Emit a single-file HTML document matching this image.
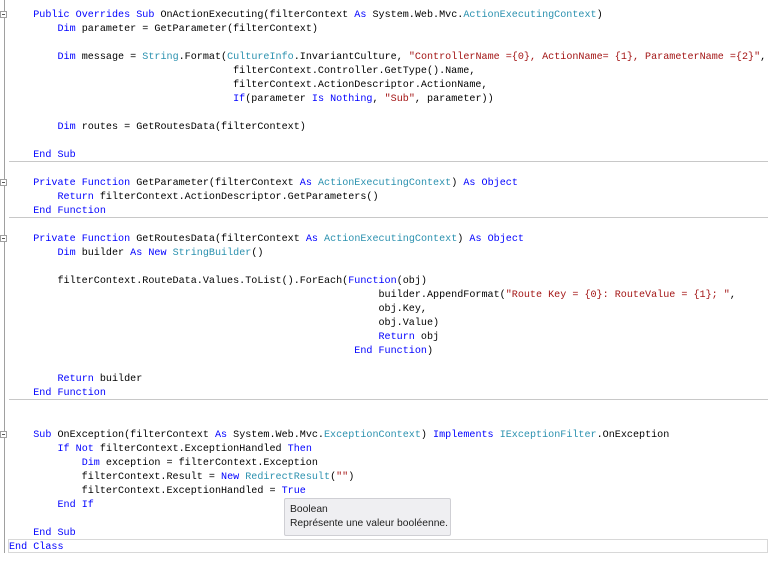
<!DOCTYPE html>
<html><head><meta charset="utf-8"><style>
body{margin:0;width:768px;height:569px;background:#fff;overflow:hidden;position:relative;font-family:"Liberation Mono",monospace;}
#code{position:absolute;left:9px;top:9px;font-size:10.1px;line-height:14px;white-space:pre;color:#000;}
.k{color:#0000ff}.t{color:#2b91af}.s{color:#a31515}
.sep{position:absolute;left:9px;right:0;height:1px;background:#c8c8c8}
.gut{position:absolute;left:4px;top:0;width:1px;height:553px;background:#a0a0a0}
.box{position:absolute;left:0;width:7px;height:7px;border:1px solid #a0a0a0;background:#fff;box-sizing:border-box}
.box:after{content:"";position:absolute;left:1px;top:2px;width:3px;height:1px;background:#555}
.cur{position:absolute;left:8px;right:0;top:539px;height:14px;border:1px solid #d8d8d8;box-sizing:border-box}
.tip{position:absolute;left:284px;top:498px;width:167px;height:38px;background:#efeff2;border:1px solid #cfcfd4;box-sizing:border-box;border-radius:2px;font-family:"Liberation Sans",sans-serif;font-size:10.3px;color:#1e1e1e;padding:4px 0 0 5px;line-height:14px;white-space:nowrap}
</style></head><body>
<div class="gut"></div>
<div class="box" style="top:11px"></div>
<div class="box" style="top:179px"></div>
<div class="box" style="top:235px"></div>
<div class="box" style="top:431px"></div>
<div class="sep" style="top:161px"></div>
<div class="sep" style="top:217px"></div>
<div class="sep" style="top:399px"></div>
<div class="cur"></div>
<div id="code">    <span class="k">Public</span> <span class="k">Overrides</span> <span class="k">Sub</span> OnActionExecuting(filterContext <span class="k">As</span> System.Web.Mvc.<span class="t">ActionExecutingContext</span>)
        <span class="k">Dim</span> parameter = GetParameter(filterContext)

        <span class="k">Dim</span> message = <span class="t">String</span>.Format(<span class="t">CultureInfo</span>.InvariantCulture, <span class="s">"ControllerName ={0}, ActionName= {1}, ParameterName ={2}"</span>,
                                     filterContext.Controller.GetType().Name,
                                     filterContext.ActionDescriptor.ActionName,
                                     <span class="k">If</span>(parameter <span class="k">Is</span> <span class="k">Nothing</span>, <span class="s">"Sub"</span>, parameter))

        <span class="k">Dim</span> routes = GetRoutesData(filterContext)

    <span class="k">End</span> <span class="k">Sub</span>

    <span class="k">Private</span> <span class="k">Function</span> GetParameter(filterContext <span class="k">As</span> <span class="t">ActionExecutingContext</span>) <span class="k">As</span> <span class="k">Object</span>
        <span class="k">Return</span> filterContext.ActionDescriptor.GetParameters()
    <span class="k">End</span> <span class="k">Function</span>

    <span class="k">Private</span> <span class="k">Function</span> GetRoutesData(filterContext <span class="k">As</span> <span class="t">ActionExecutingContext</span>) <span class="k">As</span> <span class="k">Object</span>
        <span class="k">Dim</span> builder <span class="k">As</span> <span class="k">New</span> <span class="t">StringBuilder</span>()

        filterContext.RouteData.Values.ToList().ForEach(<span class="k">Function</span>(obj)
                                                             builder.AppendFormat(<span class="s">"Route Key = {0}: RouteValue = {1}; "</span>,
                                                             obj.Key,
                                                             obj.Value)
                                                             <span class="k">Return</span> obj
                                                         <span class="k">End</span> <span class="k">Function</span>)

        <span class="k">Return</span> builder
    <span class="k">End</span> <span class="k">Function</span>


    <span class="k">Sub</span> OnException(filterContext <span class="k">As</span> System.Web.Mvc.<span class="t">ExceptionContext</span>) <span class="k">Implements</span> <span class="t">IExceptionFilter</span>.OnException
        <span class="k">If</span> <span class="k">Not</span> filterContext.ExceptionHandled <span class="k">Then</span>
            <span class="k">Dim</span> exception = filterContext.Exception
            filterContext.Result = <span class="k">New</span> <span class="t">RedirectResult</span>(<span class="s">""</span>)
            filterContext.ExceptionHandled = <span class="k">True</span>
        <span class="k">End</span> <span class="k">If</span>

    <span class="k">End</span> <span class="k">Sub</span>
<span class="k">End</span> <span class="k">Class</span></div>
<div class="tip">Boolean<br>Représente une valeur booléenne.</div>
</body></html>
